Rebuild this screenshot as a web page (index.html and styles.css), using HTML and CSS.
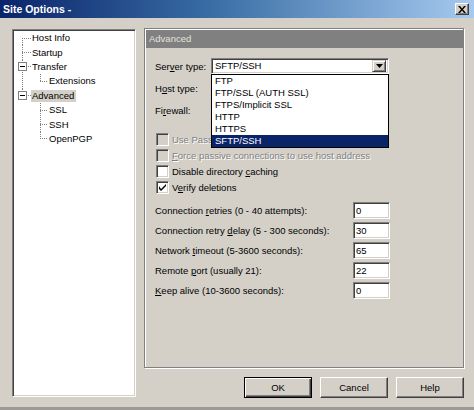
FILE: index.html
```html
<!DOCTYPE html>
<html>
<head>
<meta charset="utf-8">
<link rel="stylesheet" href="styles.css">
</head>
<body>
<div class="window">
  <div class="titlebar">
    <span class="title">Site Options -</span>
    <span class="close"><svg width="8" height="7" viewBox="0 0 8 7"><path d="M0 0h2l2 2.5L6 0h2L5 3.5 8 7H6L4 4.5 2 7H0l3-3.5z" fill="#000"/></svg></span>
  </div>
  <div class="main">
    <div class="tree">
      <div class="node"><span class="cell c-first"></span><span class="label">Host Info</span></div>
      <div class="node"><span class="cell c-mid"></span><span class="label">Startup</span></div>
      <div class="node"><span class="cell c-mid"><span class="box"></span></span><span class="label">Transfer</span></div>
      <div class="node"><span class="cell c-pass"></span><span class="cell child c-last"></span><span class="label">Extensions</span></div>
      <div class="node"><span class="cell c-last"><span class="box"></span></span><span class="label selected">Advanced</span></div>
      <div class="node"><span class="cell"></span><span class="cell child c-mid"></span><span class="label">SSL</span></div>
      <div class="node"><span class="cell"></span><span class="cell child c-mid"></span><span class="label">SSH</span></div>
      <div class="node"><span class="cell"></span><span class="cell child c-last"></span><span class="label">OpenPGP</span></div>
    </div>
    <div class="right">
      <div class="panel">
        <div class="panel-head">Advanced</div>
        <div class="panel-body">
          <div class="field">
            <span class="flabel">Ser<u>v</u>er type:</span>
            <div class="combo-wrap">
              <div class="combo"><span class="combo-text">SFTP/SSH</span><span class="drop"><svg width="7" height="4" viewBox="0 0 7 4"><path d="M0 0h7L3.5 4z" fill="#000"/></svg></span></div>
              <ul class="list">
                <li>FTP</li>
                <li>FTP/SSL (AUTH SSL)</li>
                <li>FTPS/Implicit SSL</li>
                <li>HTTP</li>
                <li>HTTPS</li>
                <li class="sel">SFTP/SSH</li>
              </ul>
            </div>
          </div>
          <div class="field">
            <span class="flabel">H<u>o</u>st type:</span>
            <div class="combo"></div>
          </div>
          <div class="field">
            <span class="flabel">Fi<u>r</u>ewall:</span>
            <div class="combo"></div>
          </div>

          <div class="checks">
            <div class="check disabled"><span class="cb"></span><span class="clipped">Use Passive mode</span></div>
            <div class="check disabled"><span class="cb"></span><span><u>F</u>orce passive connections to use host address</span></div>
            <div class="check"><span class="cb"></span><span>Disable directory <u>c</u>aching</span></div>
            <div class="check"><span class="cb"><svg width="7" height="7" viewBox="0 0 7 7"><path d="M0 2v3l2 2 5-5V-0L2 5z" fill="#000"/></svg></span><span>V<u>e</u>rify deletions</span></div>
          </div>

          <div class="nums">
            <div class="numrow"><span class="nlabel">Connection <u>r</u>etries (0 - 40 attempts):</span><span class="num">0</span></div>
            <div class="numrow"><span class="nlabel">Connection retry <u>d</u>elay (5 - 300 seconds):</span><span class="num">30</span></div>
            <div class="numrow"><span class="nlabel">Network <u>t</u>imeout (5-3600 seconds):</span><span class="num">65</span></div>
            <div class="numrow"><span class="nlabel">Remote <u>p</u>ort (usually 21):</span><span class="num">22</span></div>
            <div class="numrow"><span class="nlabel"><u>K</u>eep alive (10-3600 seconds):</span><span class="num">0</span></div>
          </div>
        </div>
      </div>
      <div class="buttons">
        <span class="btn default">OK</span>
        <span class="btn">Cancel</span>
        <span class="btn">Help</span>
      </div>
    </div>
  </div>
</div>
</body>
</html>
```
FILE: styles.css
```css
html, body {
  margin: 0;
  padding: 0;
}
body {
  width: 474px;
  height: 410px;
  overflow: hidden;
  background: #d4d0c8;
  font-family: "Liberation Sans", Arial, sans-serif;
  font-size: 9.5px;
  color: #000;
}
.window {
  width: 474px;
  height: 410px;
  box-sizing: border-box;
  background: #d4d0c8;
  border-bottom: 3px solid #9c9a94;
}
.titlebar {
  height: 18px;
  background: linear-gradient(to right, #0a246a 0%, #3a6ea5 45%, #a6caf0 100%);
  display: flex;
  align-items: center;
  justify-content: space-between;
  padding: 0 5px 0 3px;
}
.title {
  color: #fff;
  font-weight: bold;
  font-size: 10.5px;
}
.close {
  width: 14px;
  height: 12px;
  box-sizing: border-box;
  background: #d4d0c8;
  border: 1px solid;
  border-color: #fff #404040 #404040 #fff;
  box-shadow: inset -1px -1px 0 #808080;
  display: flex;
  align-items: center;
  justify-content: center;
}
.main {
  display: flex;
  padding: 10px 0 0 12px;
}
.tree {
  width: 124px;
  height: 368px;
  margin-top: 1px;
  box-sizing: border-box;
  background: #fff;
  border: 1px solid;
  border-color: #808080 #fff #fff #808080;
  box-shadow: inset 1px 1px 0 #404040, inset -1px -1px 0 #d4d0c8;
  padding: 1px 1px 0 1px;
  --vd: repeating-linear-gradient(to bottom, #808080 0 1px, transparent 1px 2px);
  --hd: repeating-linear-gradient(to right, #808080 0 1px, transparent 1px 2px);
}
.node {
  display: flex;
  align-items: center;
  height: 14.4px;
}
.cell {
  width: 17px;
  height: 100%;
  flex: none;
  display: flex;
  align-items: center;
  --x: 8px;
}
.cell.child {
  --x: 9px;
}
.c-first {
  background: var(--hd) var(--x) 50% / calc(100% - var(--x)) 1px no-repeat,
              var(--vd) var(--x) 100% / 1px 50% no-repeat;
}
.c-mid {
  background: var(--hd) var(--x) 50% / calc(100% - var(--x)) 1px no-repeat,
              var(--vd) var(--x) 0 / 1px 100% no-repeat;
}
.c-last {
  background: var(--hd) var(--x) 50% / calc(100% - var(--x)) 1px no-repeat,
              var(--vd) var(--x) 0 / 1px 50% no-repeat;
}
.c-pass {
  background: var(--vd) var(--x) 0 / 1px 100% no-repeat;
}
.box {
  width: 9px;
  height: 9px;
  box-sizing: border-box;
  margin-left: 4px;
  border: 1px solid #808080;
  background: linear-gradient(#000, #000) center / 5px 1px no-repeat, #fff;
}
.label {
  padding: 0 1px;
  line-height: 12px;
  white-space: nowrap;
}
.label.selected {
  background: #d4d0c8;
  padding: 0 2px 0 1px;
}
.right {
  margin-left: 8px;
  width: 322px;
}
.panel {
  width: 320px;
  height: 340px;
  box-sizing: border-box;
  border: 1px solid #808080;
  box-shadow: 1px 1px 0 #fff, inset 1px 1px 0 #fff;
}
.panel-head {
  margin: 1px 0 0 1px;
  height: 18px;
  background: #808080;
  color: #e4e2dc;
  line-height: 18px;
  padding-left: 3px;
}
.panel-body {
  padding: 10px 0 0 10px;
}
.field {
  display: flex;
  align-items: center;
  height: 16px;
  margin-bottom: 6px;
}
.flabel {
  width: 56px;
  flex: none;
}
.combo-wrap {
  position: relative;
}
.combo {
  width: 178px;
  height: 16px;
  box-sizing: border-box;
  background: #fff;
  border: 1px solid;
  border-color: #808080 #fff #fff #808080;
  box-shadow: inset 1px 1px 0 #404040, inset -1px -1px 0 #d4d0c8;
  display: flex;
  align-items: center;
  justify-content: space-between;
  padding: 1px 2px 1px 3px;
}
.combo-text {
  line-height: 12px;
}
.drop {
  width: 14px;
  height: 12px;
  box-sizing: border-box;
  background: #d4d0c8;
  border: 1px solid;
  border-color: #d4d0c8 #404040 #404040 #d4d0c8;
  box-shadow: inset 1px 1px 0 #fff, inset -1px -1px 0 #808080;
  display: flex;
  align-items: center;
  justify-content: center;
}
.list {
  position: absolute;
  left: 0;
  top: 16px;
  z-index: 2;
  width: 178px;
  box-sizing: border-box;
  margin: 0;
  padding: 0;
  list-style: none;
  background: #fff;
  border: 1px solid #000;
}
.list li {
  height: 12px;
  line-height: 12px;
  padding-left: 3px;
}
.list li.sel {
  background: #0a246a;
  color: #fff;
}
.checks {
  margin-top: 13px;
}
.check {
  display: flex;
  align-items: center;
  height: 16px;
  white-space: nowrap;
}
.clipped {
  width: 40px;
  overflow: hidden;
}
.cb {
  width: 13px;
  height: 13px;
  box-sizing: border-box;
  margin: 0 3px 0 1px;
  flex: none;
  background: #fff;
  border: 1px solid;
  border-color: #808080 #fff #fff #808080;
  box-shadow: inset 1px 1px 0 #404040, inset -1px -1px 0 #d4d0c8;
  display: flex;
  align-items: center;
  justify-content: center;
}
.check.disabled .cb {
  background: #d4d0c8;
}
.check.disabled {
  color: #808080;
  text-shadow: 1px 1px 0 #fff;
}
.nums {
  margin-top: 7px;
  display: flex;
  flex-direction: column;
  gap: 3px;
}
.numrow {
  display: flex;
  align-items: center;
  height: 17px;
}
.nlabel {
  width: 198px;
  flex: none;
  white-space: nowrap;
}
.num {
  width: 37px;
  height: 17px;
  box-sizing: border-box;
  background: #fff;
  border: 1px solid;
  border-color: #808080 #fff #fff #808080;
  box-shadow: inset 1px 1px 0 #404040, inset -1px -1px 0 #d4d0c8;
  padding: 2px 0 0 2px;
  line-height: 12px;
}
.buttons {
  display: flex;
  justify-content: flex-end;
  gap: 8px;
  margin-top: 9px;
  padding-right: 2px;
}
.btn {
  width: 68px;
  height: 21px;
  box-sizing: border-box;
  border: 1px solid;
  border-color: #fff #404040 #404040 #fff;
  box-shadow: inset -1px -1px 0 #808080;
  display: flex;
  align-items: center;
  justify-content: center;
}
.btn.default {
  border: 1px solid #000;
  box-shadow: inset 1px 1px 0 #fff, inset -1px -1px 0 #404040, inset -2px -2px 0 #808080;
}
```
